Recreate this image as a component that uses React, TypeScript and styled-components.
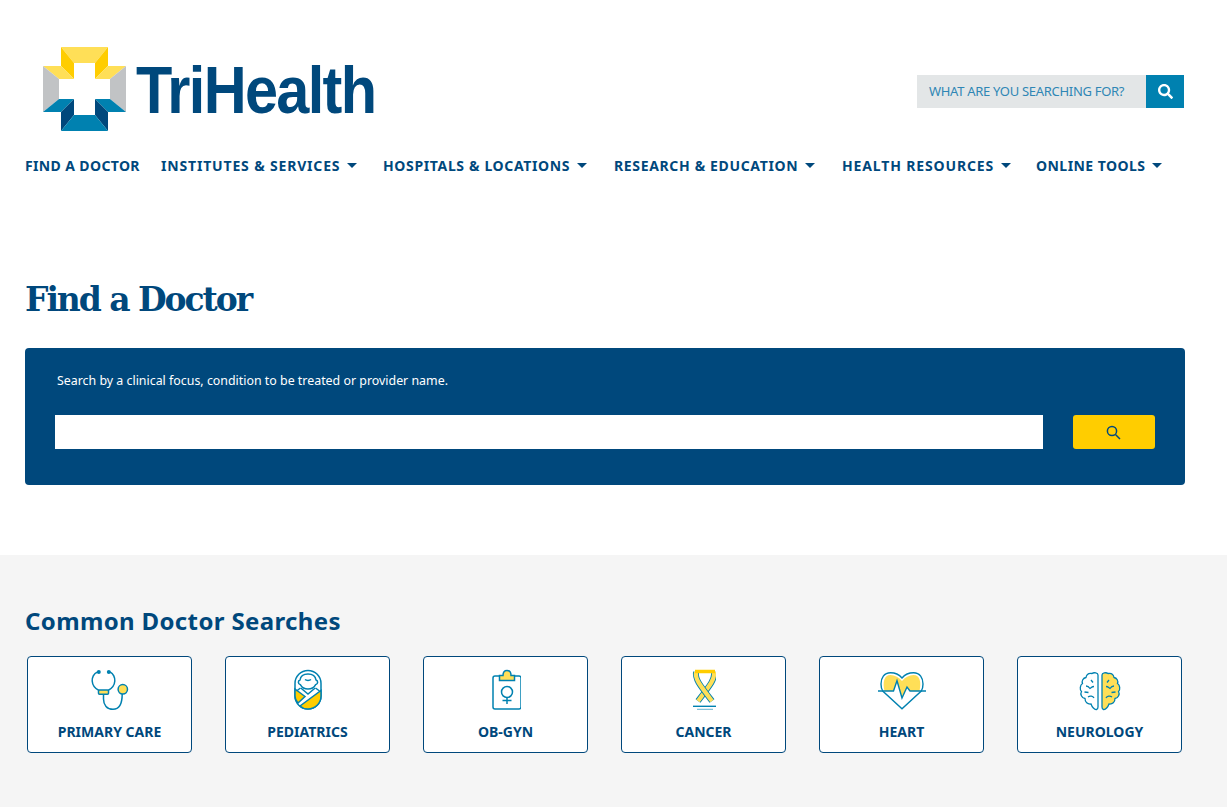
import React from "react";
import styled, { createGlobalStyle } from "styled-components";
import { FaSearch } from "react-icons/fa";

const NAVY = "#00487c";
const BLUE = "#0081b0";
const YELLOW = "#ffcd00";
const LIGHT = "#ffdf57";
const UI = '"Noto Sans", "Liberation Sans", sans-serif';

const Global = createGlobalStyle`
  html, body { margin: 0; padding: 0; background: #fff; }
  body { font-family: ${UI}; color: ${NAVY}; }
`;

const Page = styled.div`
  min-height: 807px;
  display: flex;
  flex-direction: column;
`;
const Header = styled.header`
  padding: 47px 43px 0 25px;
`;
const TopRow = styled.div`
  display: flex;
  justify-content: space-between;
  align-items: flex-start;
`;
const Logo = styled.div`
  display: flex;
  align-items: center;
  margin-left: 18px;
  height: 84px;
`;
const LogoText = styled.span`
  font-family: "Liberation Sans", Arial, sans-serif;
  font-weight: 700;
  font-size: 66px;
  line-height: 84px;
  letter-spacing: -1.84px;
  color: ${NAVY};
  margin-left: 10px;
  display: inline-block;
  transform: scaleX(0.9);
  transform-origin: left center;
  position: relative;
  top: 1px;
`;
const SiteSearch = styled.form`
  display: flex;
  width: 267px;
  height: 33px;
  margin-top: 28px;
`;
const SiteField = styled.div`
  flex: 1;
  background: #e3e6e7;
  color: #2f86b5;
  font-size: 13px;
  letter-spacing: -0.3px;
  line-height: 33px;
  padding-left: 12px;
  white-space: nowrap;
`;
const SiteButton = styled.button`
  width: 38px;
  border: 0;
  padding: 0;
  background: ${BLUE};
  color: #fff;
  display: flex;
  align-items: center;
  justify-content: center;
  font-size: 15px;
`;
const Nav = styled.nav`
  display: flex;
  margin-top: 23px;
  height: 22px;
  align-items: center;
`;
const NavItem = styled.a<{ $w: number; $track: number }>`
  width: ${(p) => p.$w}px;
  flex: none;
  display: flex;
  align-items: center;
  gap: 7px;
  font-size: 14px;
  font-weight: 700;
  letter-spacing: ${(p) => p.$track}px;
  white-space: nowrap;
  color: ${NAVY};
`;
const Caret = styled.i`
  width: 0;
  height: 0;
  border-left: 5px solid transparent;
  border-right: 5px solid transparent;
  border-top: 5px solid ${NAVY};
  margin-top: 1px;
`;
const Main = styled.main`
  padding: 0 42px 0 25px;
`;
const Title = styled.h1`
  margin: 103px 0 27px;
  font-family: "DejaVu Serif", serif;
  font-weight: 700;
  font-size: 33px;
  line-height: 42px;
  letter-spacing: -2.05px;
  color: ${NAVY};
`;
const Panel = styled.section`
  background: ${NAVY};
  border-radius: 4px;
  height: 137px;
  padding: 24px 30px 0;
  box-sizing: border-box;
`;
const PanelLabel = styled.div`
  color: #fff;
  font-size: 12.4px;
  line-height: 18px;
  margin-left: 2px;
`;
const PanelRow = styled.div`
  display: flex;
  justify-content: space-between;
  margin-top: 25px;
`;
const BigInput = styled.div`
  width: 988px;
  height: 34px;
  background: #fff;
`;
const GoButton = styled.button`
  width: 82px;
  height: 34px;
  border: 0;
  padding: 0 2px 0 0;
  border-radius: 3px;
  background: ${YELLOW};
  display: flex;
  align-items: center;
  justify-content: center;
`;
const Common = styled.section`
  flex: 1;
  margin-top: 70px;
  background: #f5f5f5;
  padding: 48px 45px 50px 25px;
`;
const CommonTitle = styled.h2`
  margin: 0;
  font-size: 24px;
  line-height: 36px;
  font-weight: 700;
  letter-spacing: 0.36px;
  color: ${NAVY};
`;
const CardRow = styled.div`
  display: grid;
  grid-template-columns: repeat(6, 165px);
  column-gap: 33px;
  margin: 17px 0 0 2px;
`;
const Card = styled.a`
  height: 97px;
  box-sizing: border-box;
  background: #fff;
  border: 1px solid ${NAVY};
  border-radius: 4px;
  display: flex;
  flex-direction: column;
  align-items: center;
  padding-top: 12px;
`;
const IconWrap = styled.div`
  height: 44px;
  svg { display: block; }
`;
const CardLabel = styled.span`
  margin-top: 8px;
  font-size: 14px;
  line-height: 22px;
  font-weight: 700;
  color: ${NAVY};
`;

const Mark = () => (
  <svg width="83" height="84" viewBox="43 47 83 84">
    <polygon points="61,47 108,47 95,63 74,63" fill={LIGHT} />
    <polygon points="61,47 74,63 74,79 61,66" fill={YELLOW} />
    <polygon points="108,47 95,63 95,79 108,66" fill={YELLOW} />
    <polygon points="43,66 61,66 74,79 59,79" fill={LIGHT} />
    <polygon points="126,66 108,66 95,79 110,79" fill={LIGHT} />
    <polygon points="43,66 59,79 59,99 43,112" fill="#c1c3c5" />
    <polygon points="126,66 110,79 110,99 126,112" fill="#c1c3c5" />
    <polygon points="43,112 59,99 74,99 61,112" fill={BLUE} />
    <polygon points="126,112 110,99 95,99 108,112" fill={BLUE} />
    <polygon points="61,112 74,99 74,115 61,131" fill={NAVY} />
    <polygon points="108,112 95,99 95,115 108,131" fill={NAVY} />
    <polygon points="61,131 74,115 95,115 108,131" fill={BLUE} />
  </svg>
);

const Stethoscope = () => (
  <svg width="42" height="44" viewBox="0 0 42 44" fill="none" stroke={BLUE} strokeWidth="1.5">
    <circle cx="9.800" cy="3" r="2" fill={BLUE} stroke="none" />
    <circle cx="19.800" cy="3" r="2" fill={BLUE} stroke="none" />
    <path d="M8.500 3C4.500 4.500 3 9 3.200 12 3.500 17 7 20 10 21.500M21 3c3.500 1.500 5 6 4.800 9-.3 5-3.800 8-6.800 9.500" />
    <rect x="9.500" y="21" width="10" height="4.300" rx="1" fill={LIGHT} />
    <path d="M14.500 25.300V30c0 6 3.500 10.300 9.500 10.300s9.200-5.300 9.200-15.300" />
    <circle cx="33.800" cy="20.300" r="4.700" fill={LIGHT} />
  </svg>
);
const Baby = () => (
  <svg width="28" height="42" viewBox="0 0 28 42" fill="none" stroke={BLUE} strokeWidth="1.500">
    <rect x="1" y="1.500" width="26" height="38.500" rx="13" fill="#fff" />
    <path d="M1 20l10 7.500L4 34c-2-2-3-4.500-3-7z" fill={YELLOW} />
    <path d="M27 21.500V27c0 7.500-6 13-13 13-3 0-6-1-8-3z" fill={YELLOW} />
    <path d="M14 5c-4.500 0-7.500 2.500-8 6-2 .5-2.500 4 .5 4.800C8 18.500 11 20 14 20s6-1.500 7.500-4.200c3-.8 2.500-4.300.5-4.800-.5-3.500-3.500-6-8-6z" />
    <path d="M6.500 19 2.500 22M21.500 19l4 3M11 10.500c1.500 1.300 4.500 1.300 6 0" />
    <path d="M6.800 19 14 25l7.200-6" />
  </svg>
);
const Clipboard = () => (
  <svg width="30" height="42" viewBox="-1 0 30 42" fill="none" stroke={BLUE} strokeWidth="1.500">
    <rect x="1" y="7" width="28" height="33" rx="2" />
    <path d="M7.500 11.500V6.500h3.500c0-3 1.500-5 4-5s4 2 4 5h3.500v5z" fill={LIGHT} />
    <circle cx="15" cy="23" r="5.500" />
    <path d="M15 28.500V35M10.500 31.500h9" />
  </svg>
);
const Ribbon = () => (
  <svg width="24" height="42" viewBox="-1 0 24 42" fill="none">
    <path d="M21 3C22 10 18 15 5 32" stroke={BLUE} strokeWidth="6" />
    <path d="M21 3C22 10 18 15 5 32" stroke={LIGHT} strokeWidth="4.200" />
    <path d="M3 3C2 10 6 15 19 32" stroke={BLUE} strokeWidth="6" />
    <path d="M3 3C2 10 6 15 19 32" stroke={LIGHT} strokeWidth="4.200" />
    <path d="M2 2.500h20" stroke={YELLOW} strokeWidth="3.500" />
    <path d="M0 37.300h24" stroke={BLUE} strokeWidth="1.400" />
    <path d="M4 40.300h16" stroke={BLUE} strokeWidth="1" opacity="0.6" />
  </svg>
);
const Heart = () => (
  <svg width="48" height="42" viewBox="0 -3 48 42" fill="none" stroke={BLUE} strokeWidth="1.400">
    <path d="M6.500 19C4.500 10 6 3 12.500 3 17 3 21 5.500 24 9c3-3.500 7-6 11.500-6C42 3 43.500 10 41.500 19H32l-3-4-5 11-5-17-3.500 10z" fill={LIGHT} stroke="none" />
    <path d="M24 6C21 2.500 17 .8 12.500.8 6 .8 3 6 3 12c0 2.500.5 5 1.700 7L24 36.700 43.300 19c1.200-2 1.700-4.500 1.700-7C45 6 42 .8 35.500.8 31 .8 27 2.500 24 6z" />
    <path d="M0 19h15.500L19 8.700 24 26l5-11 3 4h16" />
  </svg>
);
const Brain = () => (
  <svg width="42" height="42" viewBox="0 -3 42 42" fill="none" stroke={BLUE} strokeWidth="1.300">
    <path d="M23 3c0-2 4-3 6-1.500 3-.5 5.500 1 6 4 3 .5 4.500 3.500 3.500 6 2.500 1.500 3 6 1 8 1.500 2.500 0 6.500-3.500 7 0 3.500-2.500 6-6 5.500-1 3-3.500 6-5.500 5.500-1.500-.4-1.500-1.500-1.500-2.500z" fill={LIGHT} />
    <path d="M19 3c0-2-4-3-6-1.500-3-.5-5.500 1-6 4-3 .5-4.500 3.500-3.500 6-2.500 1.500-3 6-1 8-1.500 2.500 0 6.500 3.500 7 0 3.500 2.500 6 6 5.500 1 3 3.500 6 5.500 5.500 1.500-.4 1.500-1.500 1.500-2.500z" fill="#fff" />
    <path d="M7 14c2 0 3 1 4 2.500 1-.5 2-2 4-2M9 25c2-1.500 5-1 6 1M12 8l2 2.500M5.500 20l4 .5M35 14c-2 0-3 1-4 2.500-1-.5-2-2-4-2M33 25c-2-1.500-5-1-6 1M30 8l-2 2.500M36.500 20l-4 .5" />
  </svg>
);
const Magnifier = () => (
  <svg width="15" height="15" viewBox="0 0 15 15" fill="none" stroke={NAVY} strokeWidth="1.500">
    <circle cx="6" cy="6" r="4.600" />
    <path d="M9.500 9.500 14 14" />
  </svg>
);

const navItems: [string, number, number, boolean][] = [
  ["FIND A DOCTOR", 136, 0.37, false],
  ["INSTITUTES & SERVICES", 222, 0.83, true],
  ["HOSPITALS & LOCATIONS", 231, 0.64, true],
  ["RESEARCH & EDUCATION", 228, 0.65, true],
  ["HEALTH RESOURCES", 194, 0.86, true],
  ["ONLINE TOOLS", 130, 0.45, true],
];
const cards: [string, React.ReactNode][] = [
  ["PRIMARY CARE", <Stethoscope />],
  ["PEDIATRICS", <Baby />],
  ["OB-GYN", <Clipboard />],
  ["CANCER", <Ribbon />],
  ["HEART", <Heart />],
  ["NEUROLOGY", <Brain />],
];

export default function App() {
  return (
    <Page>
      <Global />
      <Header>
        <TopRow>
          <Logo>
            <Mark />
            <LogoText>TriHealth</LogoText>
          </Logo>
          <SiteSearch>
            <SiteField>WHAT ARE YOU SEARCHING FOR?</SiteField>
            <SiteButton type="button" aria-label="Search"><FaSearch /></SiteButton>
          </SiteSearch>
        </TopRow>
        <Nav>
          {navItems.map(([label, w, track, caret]) => (
            <NavItem key={label} $w={w} $track={track}>
              {label}
              {caret && <Caret />}
            </NavItem>
          ))}
        </Nav>
      </Header>
      <Main>
        <Title>Find a Doctor</Title>
        <Panel>
          <PanelLabel>Search by a clinical focus, condition to be treated or provider name.</PanelLabel>
          <PanelRow>
            <BigInput />
            <GoButton type="button" aria-label="Search"><Magnifier /></GoButton>
          </PanelRow>
        </Panel>
      </Main>
      <Common>
        <CommonTitle>Common Doctor Searches</CommonTitle>
        <CardRow>
          {cards.map(([label, icon]) => (
            <Card key={label}>
              <IconWrap>{icon}</IconWrap>
              <CardLabel>{label}</CardLabel>
            </Card>
          ))}
        </CardRow>
      </Common>
    </Page>
  );
}
